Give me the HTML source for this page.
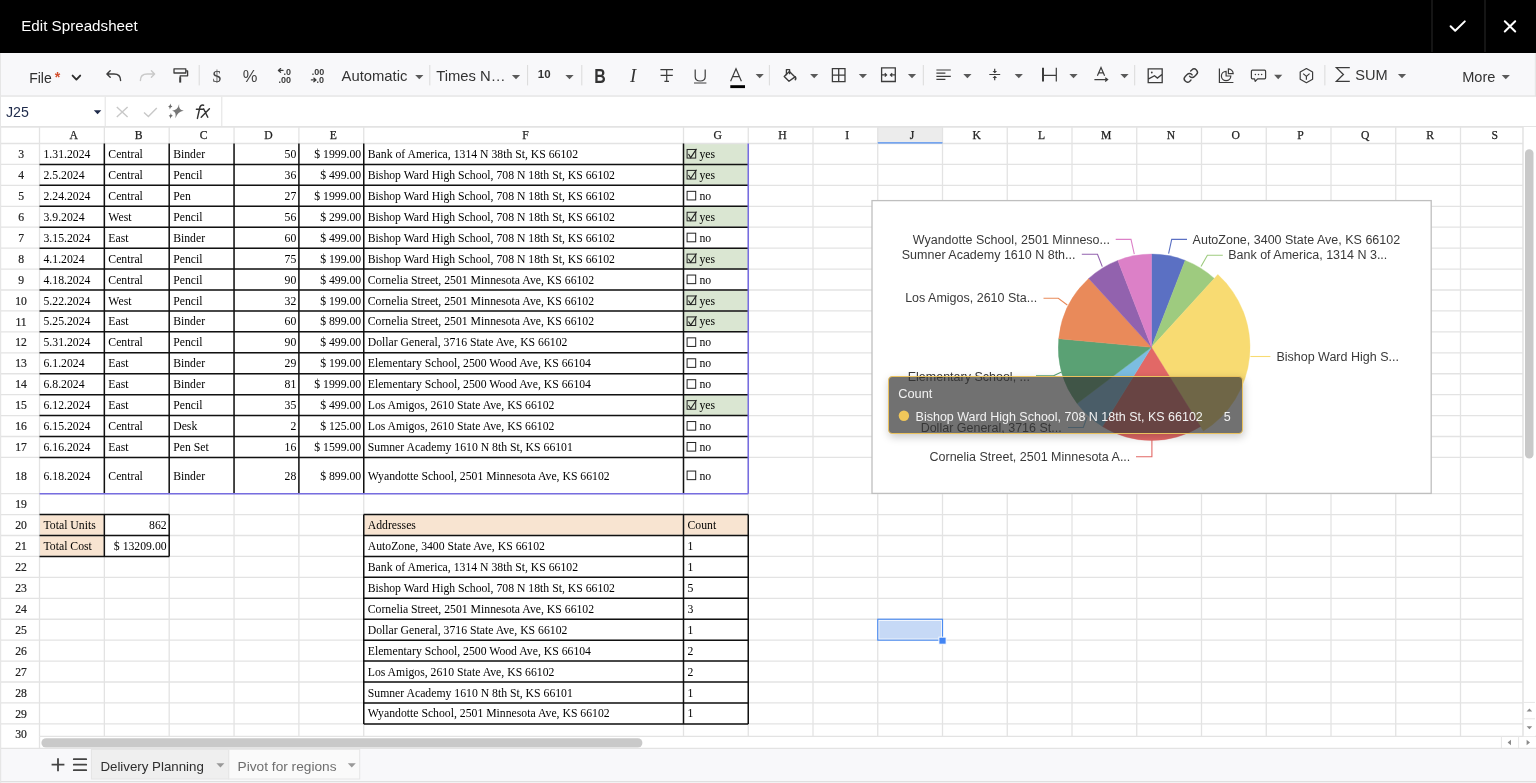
<!DOCTYPE html>
<html><head><meta charset="utf-8"><title>Edit Spreadsheet</title>
<style>
html,body{margin:0;padding:0;background:#fff;width:1536px;height:783px;overflow:hidden;font-family:"Liberation Sans",sans-serif;}
svg{position:absolute;left:0;top:0;display:block;will-change:transform}
</style></head><body>
<svg width="1536" height="783" viewBox="0 0 1536 783">
<rect x="0" y="0" width="1536" height="53" fill="#000"/>
<text x="21.2" y="31.2" font-family='"Liberation Sans", sans-serif' font-size="15.2" fill="#fff">Edit Spreadsheet</text>
<line x1="1432" y1="0" x2="1432" y2="52" stroke="#2b2b2b" stroke-width="1"/>
<line x1="1485" y1="0" x2="1485" y2="52" stroke="#2b2b2b" stroke-width="1"/>
<path d="M1450.6 26.2 L1455.2 30.8 L1464.8 21.4" fill="none" stroke="#fff" stroke-width="2" stroke-linecap="round" stroke-linejoin="round"/>
<path d="M1504.8 21.3 L1515.2 31.5 M1515.2 21.3 L1504.8 31.5" fill="none" stroke="#fff" stroke-width="2" stroke-linecap="round"/>
<rect x="0" y="53" width="1536" height="43" fill="#f8f8fa"/>
<line x1="0" y1="96.2" x2="1536" y2="96.2" stroke="#dedede" stroke-width="1.2"/>
<line x1="1535.3" y1="53" x2="1535.3" y2="783" stroke="#e3e3e3" stroke-width="1"/>
<text x="29.20" y="82.80" font-family='"Liberation Sans", sans-serif' font-size="14" fill="#2e2e2e" font-weight="normal" font-style="normal" text-anchor="start" >File</text>
<text x="54.70" y="81.60" font-family='"Liberation Sans", sans-serif' font-size="14.2" fill="#d4502e" font-weight="bold" font-style="normal" text-anchor="start" >*</text>
<path d="M72.6 75.6 L76.4 79.6 L80.2 75.6" fill="none" stroke="#2e2e2e" stroke-width="1.9" stroke-linecap="round" stroke-linejoin="round"/>
<path d="M110.2 70.8 L106.9 74 L110.2 77.2 M107.2 74 H114 Q120.6 74 120.6 80.6" fill="none" stroke="#3c3c3c" stroke-width="1.4" stroke-linecap="round" stroke-linejoin="round"/>
<path d="M151.4 70.8 L154.6 74 L151.4 77.2 M154.2 74 H147.2 Q140.4 74 140.4 80.6" fill="none" stroke="#c9c9c9" stroke-width="1.4" stroke-linecap="round" stroke-linejoin="round"/>
<path d="M174 68.8 H185.8 V73 H174 Z M185.8 70.9 H187.6 V75.8 H180.2 V78" fill="none" stroke="#3c3c3c" stroke-width="1.3" stroke-linejoin="round"/>
<rect x="179.2" y="77.4" width="2" height="5.2" fill="#3c3c3c"/>
<line x1="199.2" y1="65" x2="199.2" y2="85.4" stroke="#dadada" stroke-width="1"/>
<text x="212.40" y="81.90" font-family='"Liberation Serif", serif' font-size="17.5" fill="#444" font-weight="normal" font-style="normal" text-anchor="start" >$</text>
<text x="242.80" y="82.20" font-family='"Liberation Sans", sans-serif' font-size="16.5" fill="#444" font-weight="normal" font-style="normal" text-anchor="start" >%</text>
<path d="M283 70.4 H278.4 M280.6 68.6 L278.4 70.4 L280.6 72.2" fill="none" stroke="#3c3c3c" stroke-width="1.3" stroke-linecap="round" stroke-linejoin="round"/>
<text x="283.60" y="74.90" font-family='"Liberation Sans", sans-serif' font-size="9" fill="#3c3c3c" font-weight="bold" font-style="normal" text-anchor="start" >.0</text>
<text x="278.40" y="83.30" font-family='"Liberation Sans", sans-serif' font-size="9" fill="#3c3c3c" font-weight="bold" font-style="normal" text-anchor="start" >.00</text>
<text x="311.80" y="74.90" font-family='"Liberation Sans", sans-serif' font-size="9" fill="#3c3c3c" font-weight="bold" font-style="normal" text-anchor="start" >.00</text>
<path d="M311.4 79.9 H316 M313.8 78.1 L316 79.9 L313.8 81.7" fill="none" stroke="#3c3c3c" stroke-width="1.3" stroke-linecap="round" stroke-linejoin="round"/>
<text x="316.40" y="83.30" font-family='"Liberation Sans", sans-serif' font-size="9" fill="#3c3c3c" font-weight="bold" font-style="normal" text-anchor="start" >.0</text>
<text x="341.60" y="80.60" font-family='"Liberation Sans", sans-serif' font-size="14.8" fill="#333" font-weight="normal" font-style="normal" text-anchor="start" >Automatic</text>
<path d="M415.20 74.95 L423.40 74.95 L419.30 79.25 Z" fill="#5a5a5a"/>
<line x1="429.8" y1="65" x2="429.8" y2="85.4" stroke="#dadada" stroke-width="1"/>
<text x="436.20" y="80.60" font-family='"Liberation Sans", sans-serif' font-size="14.8" fill="#333" font-weight="normal" font-style="normal" text-anchor="start" >Times N…</text>
<path d="M511.90 74.95 L520.10 74.95 L516.00 79.25 Z" fill="#5a5a5a"/>
<line x1="527.6" y1="65" x2="527.6" y2="85.4" stroke="#dadada" stroke-width="1"/>
<text x="537.80" y="78.40" font-family='"Liberation Sans", sans-serif' font-size="11.5" fill="#333" font-weight="bold" font-style="normal" text-anchor="start" >10</text>
<path d="M565.40 74.95 L573.60 74.95 L569.50 79.25 Z" fill="#5a5a5a"/>
<line x1="581.8" y1="65" x2="581.8" y2="85.4" stroke="#dadada" stroke-width="1"/>
<text x="594.30" y="83.00" font-family='"Liberation Sans", sans-serif' font-size="20.4" fill="#333" font-weight="bold" font-style="normal" text-anchor="start" textLength="11.5" lengthAdjust="spacingAndGlyphs">B</text>
<text x="629.90" y="82.20" font-family='"Liberation Serif", serif' font-size="18.6" fill="#333" font-weight="normal" font-style="italic" text-anchor="start" >I</text>
<path d="M660.4 69.6 H673 M666.7 69.6 V81.4 M664.4 81.4 H669 M660.6 75.3 H672.8" fill="none" stroke="#3c3c3c" stroke-width="1.2"/>
<path d="M695.2 69.4 V76.8 Q695.2 81 700.2 81 Q705.2 81 705.2 76.8 V69.4 M694 83 H706.4" fill="none" stroke="#3c3c3c" stroke-width="1.2"/>
<path d="M730.6 81.2 L736 68.8 L741.4 81.2 M732.6 76.6 H739.4" fill="none" stroke="#3c3c3c" stroke-width="1.2"/>
<rect x="730.3" y="85.2" width="14.7" height="2.9" fill="#000"/>
<path d="M755.60 73.95 L763.80 73.95 L759.70 78.25 Z" fill="#5a5a5a"/>
<line x1="769.4" y1="65" x2="769.4" y2="85.4" stroke="#dadada" stroke-width="1"/>
<path d="M789.4 71.4 L795 76.9 L789 81.3 L784.2 76.5 Z" fill="none" stroke="#3c3c3c" stroke-width="1.35" stroke-linejoin="round"/>
<path d="M786.4 75.2 V69.6 H789.6 V74.2" fill="none" stroke="#3c3c3c" stroke-width="1.3" stroke-linejoin="round"/>
<path d="M795.3 76.9 Q796.2 78.2 795.4 79.6" fill="none" stroke="#3c3c3c" stroke-width="1.7" stroke-linecap="round"/>
<path d="M810.10 73.95 L818.30 73.95 L814.20 78.25 Z" fill="#5a5a5a"/>
<path d="M832.4 68.6 H845 V81.7 H832.4 Z M838.7 68.6 V81.7 M832.4 75.2 H845" fill="none" stroke="#3c3c3c" stroke-width="1.3"/>
<path d="M858.80 73.95 L867.00 73.95 L862.90 78.25 Z" fill="#5a5a5a"/>
<path d="M881.6 67.8 H895.3 V81.5 H881.6 Z" fill="none" stroke="#3c3c3c" stroke-width="1.3"/>
<path d="M882 74.9 H886.4 M884.8 73.2 L886.6 74.9 L884.8 76.6 M895 74.9 H890.6 M892.2 73.2 L890.4 74.9 L892.2 76.6" fill="none" stroke="#3c3c3c" stroke-width="1.2"/>
<path d="M907.90 73.95 L916.10 73.95 L912.00 78.25 Z" fill="#5a5a5a"/>
<line x1="923.3" y1="65" x2="923.3" y2="85.4" stroke="#dadada" stroke-width="1"/>
<path d="M936.4 70 H950.8 M936.4 73.2 H945.4 M936.4 76.3 H950.8 M936.4 79.3 H945.4" fill="none" stroke="#3c3c3c" stroke-width="1.2"/>
<path d="M963.30 73.95 L971.50 73.95 L967.40 78.25 Z" fill="#5a5a5a"/>
<path d="M989.3 74.5 H1000.2 M994.7 68.8 V72.6 M994.7 76.4 V80.2" fill="none" stroke="#3c3c3c" stroke-width="1.2"/>
<path d="M992.5 71.0 L994.8 73.2 L997.1 71.0 Z M992.5 78.0 L994.8 75.8 L997.1 78.0 Z" fill="#3c3c3c"/>
<path d="M1014.70 73.95 L1022.90 73.95 L1018.80 78.25 Z" fill="#5a5a5a"/>
<path d="M1043 67.7 V81.6" stroke="#3c3c3c" stroke-width="2"/><path d="M1056.3 67.7 V81.6 M1043 75.4 H1056.3" fill="none" stroke="#3c3c3c" stroke-width="1.2"/>
<path d="M1069.40 73.95 L1077.60 73.95 L1073.50 78.25 Z" fill="#5a5a5a"/>
<path d="M1097.4 75.7 L1101 67.4 L1104.6 75.7 M1098.6 72.9 H1103.4 M1094.4 79.6 H1107.4 M1105.2 77.8 L1107.6 79.6 L1105.2 81.4" fill="none" stroke="#3c3c3c" stroke-width="1.2"/>
<path d="M1120.40 73.95 L1128.60 73.95 L1124.50 78.25 Z" fill="#5a5a5a"/>
<line x1="1134.7" y1="65" x2="1134.7" y2="85.4" stroke="#dadada" stroke-width="1"/>
<path d="M1148.2 68.8 H1162.2 V82.6 H1148.2 Z M1148.2 79.1 L1154.5 75.7 L1157.4 78.1 L1162.2 74.2" fill="none" stroke="#3c3c3c" stroke-width="1.3"/>
<circle cx="1151.8" cy="72.5" r="0.9" fill="#3c3c3c"/>
<g transform="translate(1182.9 67.6) scale(0.66)"><path d="M10 13a5 5 0 0 0 7.54.54l3-3a5 5 0 0 0-7.07-7.07l-1.72 1.71" fill="none" stroke="#3c3c3c" stroke-width="2.1" stroke-linecap="round" stroke-linejoin="round"/><path d="M14 11a5 5 0 0 0-7.54-.54l-3 3a5 5 0 0 0 7.07 7.07l1.71-1.71" fill="none" stroke="#3c3c3c" stroke-width="2.1" stroke-linecap="round" stroke-linejoin="round"/></g>
<path d="M1219.4 68.6 V82.5 H1233.4" fill="none" stroke="#3c3c3c" stroke-width="1.2"/>
<path d="M1226.1 71.3 A4.7 4.7 0 1 0 1230.8 76 H1226.1 Z M1228.4 68.9 A4.8 4.8 0 0 1 1233.2 73.7 H1228.4 Z" fill="none" stroke="#3c3c3c" stroke-width="1.2"/>
<path d="M1252.4 70.2 H1264.6 Q1265.6 70.2 1265.6 71.2 V77.8 Q1265.6 78.8 1264.6 78.8 H1257.6 L1255.2 81.4 L1254.6 78.8 H1252.4 Q1251.4 78.8 1251.4 77.8 V71.2 Q1251.4 70.2 1252.4 70.2 Z" fill="none" stroke="#3c3c3c" stroke-width="1.2" stroke-linejoin="round"/>
<circle cx="1255.4" cy="74.6" r="0.75" fill="#3c3c3c"/>
<circle cx="1258.5" cy="74.6" r="0.75" fill="#3c3c3c"/>
<circle cx="1261.6" cy="74.6" r="0.75" fill="#3c3c3c"/>
<path d="M1274.10 74.85 L1282.30 74.85 L1278.20 79.15 Z" fill="#5a5a5a"/>
<path d="M1306.4 68.6 L1312.6 72.1 V79.2 L1306.4 82.7 L1300.2 79.2 V72.1 Z M1303.2 73.6 L1306.4 76.4 L1309.6 73.6 M1306.4 76.4 V79.8" fill="none" stroke="#3c3c3c" stroke-width="1.2" stroke-linejoin="round"/>
<line x1="1324.9" y1="65" x2="1324.9" y2="85.4" stroke="#dadada" stroke-width="1"/>
<path d="M1349.8 67.6 H1336.4 L1343.4 74.5 L1336.4 81.4 H1349.8" fill="none" stroke="#3c3c3c" stroke-width="1.3" stroke-linejoin="miter"/>
<text x="1355.20" y="79.80" font-family='"Liberation Sans", sans-serif' font-size="14.6" fill="#333" font-weight="normal" font-style="normal" text-anchor="start" >SUM</text>
<path d="M1397.90 73.95 L1406.10 73.95 L1402.00 78.25 Z" fill="#5a5a5a"/>
<text x="1462.20" y="81.60" font-family='"Liberation Sans", sans-serif' font-size="14.6" fill="#333" font-weight="normal" font-style="normal" text-anchor="start" >More</text>
<path d="M1501.70 74.95 L1509.90 74.95 L1505.80 79.25 Z" fill="#5a5a5a"/>
<rect x="0" y="96.8" width="1536" height="30" fill="#fff"/>
<line x1="0" y1="126.6" x2="1536" y2="126.6" stroke="#e2e2e2" stroke-width="1"/>
<line x1="105.2" y1="96.8" x2="105.2" y2="126.6" stroke="#e2e2e2" stroke-width="1"/>
<line x1="221.8" y1="96.8" x2="221.8" y2="126.6" stroke="#e2e2e2" stroke-width="1"/>
<text x="6.00" y="116.60" font-family='"Liberation Sans", sans-serif' font-size="14.2" fill="#1e2a4a" font-weight="normal" font-style="normal" text-anchor="start" >J25</text>
<path d="M93.8 110.3 H101.3 L97.55 114.2 Z" fill="#1e2a4a"/>
<path d="M116.8 107 L127.6 117 M127.6 107 L116.8 117" fill="none" stroke="#c8c8c8" stroke-width="1.4"/>
<path d="M144 112.4 L148.4 116.6 L156.8 108" fill="none" stroke="#c8c8c8" stroke-width="1.4"/>
<path d="M179.1 103.9 Q178.4 109.9 183.8 110.7 Q177.6 111.5 175.4 118.3 Q176.8 111.6 172.1 110.7 Q177.9 109.9 179.1 103.9 Z" fill="#777"/>
<path d="M170.4 103.6 Q170.6 106 172.4 106.4 Q170.4 106.8 169.8 109.4 Q170 106.8 168.2 106.4 Q170.2 106 170.4 103.6 Z" fill="#6a6a6a"/>
<path d="M170.9 113 Q171.1 115.4 172.9 115.8 Q170.9 116.2 170.3 118.8 Q170.5 116.2 168.7 115.8 Q170.7 115.4 170.9 113 Z" fill="#6a6a6a"/>
<path d="M203.6 105.2 Q200.2 104.4 199.6 108.6 L197.4 118.4 M196.4 109.3 H203.6 M201.2 117.2 L209.4 108.8 M203.6 108.8 L207.8 117.2" fill="none" stroke="#333" stroke-width="1.45" stroke-linecap="round"/>
<rect x="0" y="127" width="1536" height="609.3" fill="#fff"/>
<rect x="877.75" y="127.00" width="64.75" height="16.50" fill="#ececec"/>
<rect x="683.50" y="143.50" width="64.75" height="20.93" fill="#dae6d2"/>
<rect x="683.50" y="164.43" width="64.75" height="20.93" fill="#dae6d2"/>
<rect x="683.50" y="206.29" width="64.75" height="20.93" fill="#dae6d2"/>
<rect x="683.50" y="248.15" width="64.75" height="20.93" fill="#dae6d2"/>
<rect x="683.50" y="290.01" width="64.75" height="20.93" fill="#dae6d2"/>
<rect x="683.50" y="310.94" width="64.75" height="20.93" fill="#dae6d2"/>
<rect x="683.50" y="394.66" width="64.75" height="20.93" fill="#dae6d2"/>
<rect x="39.50" y="514.58" width="64.85" height="20.93" fill="#f8e4d1"/>
<rect x="39.50" y="535.51" width="64.85" height="20.93" fill="#f8e4d1"/>
<rect x="363.75" y="514.58" width="384.50" height="20.93" fill="#f8e4d1"/>
<line x1="39.50" y1="127.0" x2="39.50" y2="736.3" stroke="#e3e3e3" stroke-width="1.3"/>
<line x1="104.35" y1="127.0" x2="104.35" y2="736.3" stroke="#e3e3e3" stroke-width="1.3"/>
<line x1="169.20" y1="127.0" x2="169.20" y2="736.3" stroke="#e3e3e3" stroke-width="1.3"/>
<line x1="234.05" y1="127.0" x2="234.05" y2="736.3" stroke="#e3e3e3" stroke-width="1.3"/>
<line x1="298.90" y1="127.0" x2="298.90" y2="736.3" stroke="#e3e3e3" stroke-width="1.3"/>
<line x1="363.75" y1="127.0" x2="363.75" y2="736.3" stroke="#e3e3e3" stroke-width="1.3"/>
<line x1="683.50" y1="127.0" x2="683.50" y2="736.3" stroke="#e3e3e3" stroke-width="1.3"/>
<line x1="748.25" y1="127.0" x2="748.25" y2="736.3" stroke="#e3e3e3" stroke-width="1.3"/>
<line x1="813.00" y1="127.0" x2="813.00" y2="736.3" stroke="#e3e3e3" stroke-width="1.3"/>
<line x1="877.75" y1="127.0" x2="877.75" y2="736.3" stroke="#e3e3e3" stroke-width="1.3"/>
<line x1="942.50" y1="127.0" x2="942.50" y2="736.3" stroke="#e3e3e3" stroke-width="1.3"/>
<line x1="1007.25" y1="127.0" x2="1007.25" y2="736.3" stroke="#e3e3e3" stroke-width="1.3"/>
<line x1="1072.00" y1="127.0" x2="1072.00" y2="736.3" stroke="#e3e3e3" stroke-width="1.3"/>
<line x1="1136.75" y1="127.0" x2="1136.75" y2="736.3" stroke="#e3e3e3" stroke-width="1.3"/>
<line x1="1201.50" y1="127.0" x2="1201.50" y2="736.3" stroke="#e3e3e3" stroke-width="1.3"/>
<line x1="1266.25" y1="127.0" x2="1266.25" y2="736.3" stroke="#e3e3e3" stroke-width="1.3"/>
<line x1="1331.00" y1="127.0" x2="1331.00" y2="736.3" stroke="#e3e3e3" stroke-width="1.3"/>
<line x1="1395.75" y1="127.0" x2="1395.75" y2="736.3" stroke="#e3e3e3" stroke-width="1.3"/>
<line x1="1460.50" y1="127.0" x2="1460.50" y2="736.3" stroke="#e3e3e3" stroke-width="1.3"/>
<line x1="1523.00" y1="127.0" x2="1523.00" y2="736.3" stroke="#e3e3e3" stroke-width="1.3"/>
<line x1="0" y1="127.0" x2="1523.0" y2="127.0" stroke="#e3e3e3" stroke-width="1.3"/>
<line x1="0" y1="143.50" x2="1523.0" y2="143.50" stroke="#e3e3e3" stroke-width="1.3"/>
<line x1="0" y1="164.43" x2="1523.0" y2="164.43" stroke="#e3e3e3" stroke-width="1.3"/>
<line x1="0" y1="185.36" x2="1523.0" y2="185.36" stroke="#e3e3e3" stroke-width="1.3"/>
<line x1="0" y1="206.29" x2="1523.0" y2="206.29" stroke="#e3e3e3" stroke-width="1.3"/>
<line x1="0" y1="227.22" x2="1523.0" y2="227.22" stroke="#e3e3e3" stroke-width="1.3"/>
<line x1="0" y1="248.15" x2="1523.0" y2="248.15" stroke="#e3e3e3" stroke-width="1.3"/>
<line x1="0" y1="269.08" x2="1523.0" y2="269.08" stroke="#e3e3e3" stroke-width="1.3"/>
<line x1="0" y1="290.01" x2="1523.0" y2="290.01" stroke="#e3e3e3" stroke-width="1.3"/>
<line x1="0" y1="310.94" x2="1523.0" y2="310.94" stroke="#e3e3e3" stroke-width="1.3"/>
<line x1="0" y1="331.87" x2="1523.0" y2="331.87" stroke="#e3e3e3" stroke-width="1.3"/>
<line x1="0" y1="352.80" x2="1523.0" y2="352.80" stroke="#e3e3e3" stroke-width="1.3"/>
<line x1="0" y1="373.73" x2="1523.0" y2="373.73" stroke="#e3e3e3" stroke-width="1.3"/>
<line x1="0" y1="394.66" x2="1523.0" y2="394.66" stroke="#e3e3e3" stroke-width="1.3"/>
<line x1="0" y1="415.59" x2="1523.0" y2="415.59" stroke="#e3e3e3" stroke-width="1.3"/>
<line x1="0" y1="436.52" x2="1523.0" y2="436.52" stroke="#e3e3e3" stroke-width="1.3"/>
<line x1="0" y1="457.45" x2="1523.0" y2="457.45" stroke="#e3e3e3" stroke-width="1.3"/>
<line x1="0" y1="493.65" x2="1523.0" y2="493.65" stroke="#e3e3e3" stroke-width="1.3"/>
<line x1="0" y1="514.58" x2="1523.0" y2="514.58" stroke="#e3e3e3" stroke-width="1.3"/>
<line x1="0" y1="535.51" x2="1523.0" y2="535.51" stroke="#e3e3e3" stroke-width="1.3"/>
<line x1="0" y1="556.44" x2="1523.0" y2="556.44" stroke="#e3e3e3" stroke-width="1.3"/>
<line x1="0" y1="577.37" x2="1523.0" y2="577.37" stroke="#e3e3e3" stroke-width="1.3"/>
<line x1="0" y1="598.30" x2="1523.0" y2="598.30" stroke="#e3e3e3" stroke-width="1.3"/>
<line x1="0" y1="619.23" x2="1523.0" y2="619.23" stroke="#e3e3e3" stroke-width="1.3"/>
<line x1="0" y1="640.16" x2="1523.0" y2="640.16" stroke="#e3e3e3" stroke-width="1.3"/>
<line x1="0" y1="661.09" x2="1523.0" y2="661.09" stroke="#e3e3e3" stroke-width="1.3"/>
<line x1="0" y1="682.02" x2="1523.0" y2="682.02" stroke="#e3e3e3" stroke-width="1.3"/>
<line x1="0" y1="702.95" x2="1523.0" y2="702.95" stroke="#e3e3e3" stroke-width="1.3"/>
<line x1="0" y1="723.88" x2="1523.0" y2="723.88" stroke="#e3e3e3" stroke-width="1.3"/>
<line x1="0.6" y1="127.0" x2="0.6" y2="748" stroke="#e3e3e3" stroke-width="1.2"/>
<line x1="877.75" y1="142.90" x2="942.50" y2="142.90" stroke="#4d8cf0" stroke-width="1.4"/>
<text x="73.83" y="139.10" font-family='"Liberation Serif", serif' font-size="11.67" fill="#222" font-weight="normal" font-style="normal" text-anchor="middle" stroke="#222" stroke-width="0.25">A</text>
<text x="138.67" y="139.10" font-family='"Liberation Serif", serif' font-size="11.67" fill="#222" font-weight="normal" font-style="normal" text-anchor="middle" stroke="#222" stroke-width="0.25">B</text>
<text x="203.53" y="139.10" font-family='"Liberation Serif", serif' font-size="11.67" fill="#222" font-weight="normal" font-style="normal" text-anchor="middle" stroke="#222" stroke-width="0.25">C</text>
<text x="268.37" y="139.10" font-family='"Liberation Serif", serif' font-size="11.67" fill="#222" font-weight="normal" font-style="normal" text-anchor="middle" stroke="#222" stroke-width="0.25">D</text>
<text x="333.22" y="139.10" font-family='"Liberation Serif", serif' font-size="11.67" fill="#222" font-weight="normal" font-style="normal" text-anchor="middle" stroke="#222" stroke-width="0.25">E</text>
<text x="525.52" y="139.10" font-family='"Liberation Serif", serif' font-size="11.67" fill="#222" font-weight="normal" font-style="normal" text-anchor="middle" stroke="#222" stroke-width="0.25">F</text>
<text x="717.77" y="139.10" font-family='"Liberation Serif", serif' font-size="11.67" fill="#222" font-weight="normal" font-style="normal" text-anchor="middle" stroke="#222" stroke-width="0.25">G</text>
<text x="782.52" y="139.10" font-family='"Liberation Serif", serif' font-size="11.67" fill="#222" font-weight="normal" font-style="normal" text-anchor="middle" stroke="#222" stroke-width="0.25">H</text>
<text x="847.27" y="139.10" font-family='"Liberation Serif", serif' font-size="11.67" fill="#222" font-weight="normal" font-style="normal" text-anchor="middle" stroke="#222" stroke-width="0.25">I</text>
<text x="912.02" y="139.10" font-family='"Liberation Serif", serif' font-size="11.67" fill="#222" font-weight="normal" font-style="normal" text-anchor="middle" stroke="#222" stroke-width="0.25">J</text>
<text x="976.77" y="139.10" font-family='"Liberation Serif", serif' font-size="11.67" fill="#222" font-weight="normal" font-style="normal" text-anchor="middle" stroke="#222" stroke-width="0.25">K</text>
<text x="1041.53" y="139.10" font-family='"Liberation Serif", serif' font-size="11.67" fill="#222" font-weight="normal" font-style="normal" text-anchor="middle" stroke="#222" stroke-width="0.25">L</text>
<text x="1106.28" y="139.10" font-family='"Liberation Serif", serif' font-size="11.67" fill="#222" font-weight="normal" font-style="normal" text-anchor="middle" stroke="#222" stroke-width="0.25">M</text>
<text x="1171.03" y="139.10" font-family='"Liberation Serif", serif' font-size="11.67" fill="#222" font-weight="normal" font-style="normal" text-anchor="middle" stroke="#222" stroke-width="0.25">N</text>
<text x="1235.78" y="139.10" font-family='"Liberation Serif", serif' font-size="11.67" fill="#222" font-weight="normal" font-style="normal" text-anchor="middle" stroke="#222" stroke-width="0.25">O</text>
<text x="1300.53" y="139.10" font-family='"Liberation Serif", serif' font-size="11.67" fill="#222" font-weight="normal" font-style="normal" text-anchor="middle" stroke="#222" stroke-width="0.25">P</text>
<text x="1365.28" y="139.10" font-family='"Liberation Serif", serif' font-size="11.67" fill="#222" font-weight="normal" font-style="normal" text-anchor="middle" stroke="#222" stroke-width="0.25">Q</text>
<text x="1430.03" y="139.10" font-family='"Liberation Serif", serif' font-size="11.67" fill="#222" font-weight="normal" font-style="normal" text-anchor="middle" stroke="#222" stroke-width="0.25">R</text>
<text x="1494.78" y="139.10" font-family='"Liberation Serif", serif' font-size="11.67" fill="#222" font-weight="normal" font-style="normal" text-anchor="middle" stroke="#222" stroke-width="0.25">S</text>
<text x="21.05" y="158.06" font-family='"Liberation Serif", serif' font-size="11.67" fill="#222" font-weight="normal" font-style="normal" text-anchor="middle" stroke="#222" stroke-width="0.2">3</text>
<text x="21.05" y="179.00" font-family='"Liberation Serif", serif' font-size="11.67" fill="#222" font-weight="normal" font-style="normal" text-anchor="middle" stroke="#222" stroke-width="0.2">4</text>
<text x="21.05" y="199.93" font-family='"Liberation Serif", serif' font-size="11.67" fill="#222" font-weight="normal" font-style="normal" text-anchor="middle" stroke="#222" stroke-width="0.2">5</text>
<text x="21.05" y="220.86" font-family='"Liberation Serif", serif' font-size="11.67" fill="#222" font-weight="normal" font-style="normal" text-anchor="middle" stroke="#222" stroke-width="0.2">6</text>
<text x="21.05" y="241.79" font-family='"Liberation Serif", serif' font-size="11.67" fill="#222" font-weight="normal" font-style="normal" text-anchor="middle" stroke="#222" stroke-width="0.2">7</text>
<text x="21.05" y="262.72" font-family='"Liberation Serif", serif' font-size="11.67" fill="#222" font-weight="normal" font-style="normal" text-anchor="middle" stroke="#222" stroke-width="0.2">8</text>
<text x="21.05" y="283.65" font-family='"Liberation Serif", serif' font-size="11.67" fill="#222" font-weight="normal" font-style="normal" text-anchor="middle" stroke="#222" stroke-width="0.2">9</text>
<text x="21.05" y="304.58" font-family='"Liberation Serif", serif' font-size="11.67" fill="#222" font-weight="normal" font-style="normal" text-anchor="middle" stroke="#222" stroke-width="0.2">10</text>
<text x="21.05" y="325.51" font-family='"Liberation Serif", serif' font-size="11.67" fill="#222" font-weight="normal" font-style="normal" text-anchor="middle" stroke="#222" stroke-width="0.2">11</text>
<text x="21.05" y="346.44" font-family='"Liberation Serif", serif' font-size="11.67" fill="#222" font-weight="normal" font-style="normal" text-anchor="middle" stroke="#222" stroke-width="0.2">12</text>
<text x="21.05" y="367.37" font-family='"Liberation Serif", serif' font-size="11.67" fill="#222" font-weight="normal" font-style="normal" text-anchor="middle" stroke="#222" stroke-width="0.2">13</text>
<text x="21.05" y="388.30" font-family='"Liberation Serif", serif' font-size="11.67" fill="#222" font-weight="normal" font-style="normal" text-anchor="middle" stroke="#222" stroke-width="0.2">14</text>
<text x="21.05" y="409.23" font-family='"Liberation Serif", serif' font-size="11.67" fill="#222" font-weight="normal" font-style="normal" text-anchor="middle" stroke="#222" stroke-width="0.2">15</text>
<text x="21.05" y="430.16" font-family='"Liberation Serif", serif' font-size="11.67" fill="#222" font-weight="normal" font-style="normal" text-anchor="middle" stroke="#222" stroke-width="0.2">16</text>
<text x="21.05" y="451.09" font-family='"Liberation Serif", serif' font-size="11.67" fill="#222" font-weight="normal" font-style="normal" text-anchor="middle" stroke="#222" stroke-width="0.2">17</text>
<text x="21.05" y="479.65" font-family='"Liberation Serif", serif' font-size="11.67" fill="#222" font-weight="normal" font-style="normal" text-anchor="middle" stroke="#222" stroke-width="0.2">18</text>
<text x="21.05" y="508.22" font-family='"Liberation Serif", serif' font-size="11.67" fill="#222" font-weight="normal" font-style="normal" text-anchor="middle" stroke="#222" stroke-width="0.2">19</text>
<text x="21.05" y="529.15" font-family='"Liberation Serif", serif' font-size="11.67" fill="#222" font-weight="normal" font-style="normal" text-anchor="middle" stroke="#222" stroke-width="0.2">20</text>
<text x="21.05" y="550.07" font-family='"Liberation Serif", serif' font-size="11.67" fill="#222" font-weight="normal" font-style="normal" text-anchor="middle" stroke="#222" stroke-width="0.2">21</text>
<text x="21.05" y="571.00" font-family='"Liberation Serif", serif' font-size="11.67" fill="#222" font-weight="normal" font-style="normal" text-anchor="middle" stroke="#222" stroke-width="0.2">22</text>
<text x="21.05" y="591.93" font-family='"Liberation Serif", serif' font-size="11.67" fill="#222" font-weight="normal" font-style="normal" text-anchor="middle" stroke="#222" stroke-width="0.2">23</text>
<text x="21.05" y="612.86" font-family='"Liberation Serif", serif' font-size="11.67" fill="#222" font-weight="normal" font-style="normal" text-anchor="middle" stroke="#222" stroke-width="0.2">24</text>
<text x="21.05" y="633.79" font-family='"Liberation Serif", serif' font-size="11.67" fill="#222" font-weight="normal" font-style="normal" text-anchor="middle" stroke="#222" stroke-width="0.2">25</text>
<text x="21.05" y="654.72" font-family='"Liberation Serif", serif' font-size="11.67" fill="#222" font-weight="normal" font-style="normal" text-anchor="middle" stroke="#222" stroke-width="0.2">26</text>
<text x="21.05" y="675.65" font-family='"Liberation Serif", serif' font-size="11.67" fill="#222" font-weight="normal" font-style="normal" text-anchor="middle" stroke="#222" stroke-width="0.2">27</text>
<text x="21.05" y="696.58" font-family='"Liberation Serif", serif' font-size="11.67" fill="#222" font-weight="normal" font-style="normal" text-anchor="middle" stroke="#222" stroke-width="0.2">28</text>
<text x="21.05" y="717.51" font-family='"Liberation Serif", serif' font-size="11.67" fill="#222" font-weight="normal" font-style="normal" text-anchor="middle" stroke="#222" stroke-width="0.2">29</text>
<text x="21.05" y="738.44" font-family='"Liberation Serif", serif' font-size="11.67" fill="#222" font-weight="normal" font-style="normal" text-anchor="middle" stroke="#222" stroke-width="0.2">30</text>
<line x1="39.50" y1="164.43" x2="748.25" y2="164.43" stroke="#111" stroke-width="1.5"/>
<line x1="39.50" y1="185.36" x2="748.25" y2="185.36" stroke="#111" stroke-width="1.5"/>
<line x1="39.50" y1="206.29" x2="748.25" y2="206.29" stroke="#111" stroke-width="1.5"/>
<line x1="39.50" y1="227.22" x2="748.25" y2="227.22" stroke="#111" stroke-width="1.5"/>
<line x1="39.50" y1="248.15" x2="748.25" y2="248.15" stroke="#111" stroke-width="1.5"/>
<line x1="39.50" y1="269.08" x2="748.25" y2="269.08" stroke="#111" stroke-width="1.5"/>
<line x1="39.50" y1="290.01" x2="748.25" y2="290.01" stroke="#111" stroke-width="1.5"/>
<line x1="39.50" y1="310.94" x2="748.25" y2="310.94" stroke="#111" stroke-width="1.5"/>
<line x1="39.50" y1="331.87" x2="748.25" y2="331.87" stroke="#111" stroke-width="1.5"/>
<line x1="39.50" y1="352.80" x2="748.25" y2="352.80" stroke="#111" stroke-width="1.5"/>
<line x1="39.50" y1="373.73" x2="748.25" y2="373.73" stroke="#111" stroke-width="1.5"/>
<line x1="39.50" y1="394.66" x2="748.25" y2="394.66" stroke="#111" stroke-width="1.5"/>
<line x1="39.50" y1="415.59" x2="748.25" y2="415.59" stroke="#111" stroke-width="1.5"/>
<line x1="39.50" y1="436.52" x2="748.25" y2="436.52" stroke="#111" stroke-width="1.5"/>
<line x1="39.50" y1="457.45" x2="748.25" y2="457.45" stroke="#111" stroke-width="1.5"/>
<line x1="104.35" y1="143.50" x2="104.35" y2="493.65" stroke="#111" stroke-width="1.5"/>
<line x1="169.20" y1="143.50" x2="169.20" y2="493.65" stroke="#111" stroke-width="1.5"/>
<line x1="234.05" y1="143.50" x2="234.05" y2="493.65" stroke="#111" stroke-width="1.5"/>
<line x1="298.90" y1="143.50" x2="298.90" y2="493.65" stroke="#111" stroke-width="1.5"/>
<line x1="363.75" y1="143.50" x2="363.75" y2="493.65" stroke="#111" stroke-width="1.5"/>
<line x1="683.50" y1="143.50" x2="683.50" y2="493.65" stroke="#111" stroke-width="1.5"/>
<line x1="748.25" y1="143.50" x2="748.25" y2="493.65" stroke="#776de0" stroke-width="1.55"/>
<line x1="39.50" y1="493.65" x2="748.25" y2="493.65" stroke="#776de0" stroke-width="1.55"/>
<line x1="39.50" y1="514.58" x2="169.20" y2="514.58" stroke="#111" stroke-width="1.5"/>
<line x1="39.50" y1="535.51" x2="169.20" y2="535.51" stroke="#111" stroke-width="1.5"/>
<line x1="39.50" y1="556.44" x2="169.20" y2="556.44" stroke="#111" stroke-width="1.5"/>
<line x1="104.35" y1="514.58" x2="104.35" y2="556.44" stroke="#111" stroke-width="1.5"/>
<line x1="169.20" y1="514.58" x2="169.20" y2="556.44" stroke="#111" stroke-width="1.5"/>
<line x1="363.75" y1="514.58" x2="748.25" y2="514.58" stroke="#111" stroke-width="1.5"/>
<line x1="363.75" y1="535.51" x2="748.25" y2="535.51" stroke="#111" stroke-width="1.5"/>
<line x1="363.75" y1="556.44" x2="748.25" y2="556.44" stroke="#111" stroke-width="1.5"/>
<line x1="363.75" y1="577.37" x2="748.25" y2="577.37" stroke="#111" stroke-width="1.5"/>
<line x1="363.75" y1="598.30" x2="748.25" y2="598.30" stroke="#111" stroke-width="1.5"/>
<line x1="363.75" y1="619.23" x2="748.25" y2="619.23" stroke="#111" stroke-width="1.5"/>
<line x1="363.75" y1="640.16" x2="748.25" y2="640.16" stroke="#111" stroke-width="1.5"/>
<line x1="363.75" y1="661.09" x2="748.25" y2="661.09" stroke="#111" stroke-width="1.5"/>
<line x1="363.75" y1="682.02" x2="748.25" y2="682.02" stroke="#111" stroke-width="1.5"/>
<line x1="363.75" y1="702.95" x2="748.25" y2="702.95" stroke="#111" stroke-width="1.5"/>
<line x1="363.75" y1="723.88" x2="748.25" y2="723.88" stroke="#111" stroke-width="1.5"/>
<line x1="363.75" y1="514.58" x2="363.75" y2="723.88" stroke="#111" stroke-width="1.5"/>
<line x1="683.50" y1="514.58" x2="683.50" y2="723.88" stroke="#111" stroke-width="1.5"/>
<line x1="748.25" y1="514.58" x2="748.25" y2="723.88" stroke="#111" stroke-width="1.5"/>
<rect x="879.25" y="620.73" width="61.75" height="17.93" fill="#c6d9f6"/>
<rect x="877.75" y="619.23" width="64.75" height="20.93" fill="none" stroke="#4a8bf2" stroke-width="1.15"/>
<rect x="938.90" y="637.16" width="7.2" height="7.0" fill="#4285f4" stroke="#fff" stroke-width="0.9"/>
<text x="43.50" y="158.02" font-family='"Liberation Serif", serif' font-size="11.72" fill="#000" font-weight="normal" font-style="normal" text-anchor="start" >1.31.2024</text>
<text x="108.35" y="158.02" font-family='"Liberation Serif", serif' font-size="11.72" fill="#000" font-weight="normal" font-style="normal" text-anchor="start" >Central</text>
<text x="173.20" y="158.02" font-family='"Liberation Serif", serif' font-size="11.72" fill="#000" font-weight="normal" font-style="normal" text-anchor="start" >Binder</text>
<text x="296.30" y="158.02" font-family='"Liberation Serif", serif' font-size="11.72" fill="#000" font-weight="normal" font-style="normal" text-anchor="end" >50</text>
<text x="361.15" y="158.02" font-family='"Liberation Serif", serif' font-size="11.72" fill="#000" font-weight="normal" font-style="normal" text-anchor="end" >$ 1999.00</text>
<text x="367.75" y="158.02" font-family='"Liberation Serif", serif' font-size="11.72" fill="#000" font-weight="normal" font-style="normal" text-anchor="start" >Bank of America, 1314 N 38th St, KS 66102</text>
<rect x="687.10" y="149.47" width="8.6" height="8.6" fill="none" stroke="#222" stroke-width="1"/>
<path d="M688.50 154.06 L690.70 157.66 L696.50 148.87" fill="none" stroke="#222" stroke-width="1.1"/>
<text x="699.50" y="158.02" font-family='"Liberation Serif", serif' font-size="11.72" fill="#000" font-weight="normal" font-style="normal" text-anchor="start" >yes</text>
<text x="43.50" y="178.95" font-family='"Liberation Serif", serif' font-size="11.72" fill="#000" font-weight="normal" font-style="normal" text-anchor="start" >2.5.2024</text>
<text x="108.35" y="178.95" font-family='"Liberation Serif", serif' font-size="11.72" fill="#000" font-weight="normal" font-style="normal" text-anchor="start" >Central</text>
<text x="173.20" y="178.95" font-family='"Liberation Serif", serif' font-size="11.72" fill="#000" font-weight="normal" font-style="normal" text-anchor="start" >Pencil</text>
<text x="296.30" y="178.95" font-family='"Liberation Serif", serif' font-size="11.72" fill="#000" font-weight="normal" font-style="normal" text-anchor="end" >36</text>
<text x="361.15" y="178.95" font-family='"Liberation Serif", serif' font-size="11.72" fill="#000" font-weight="normal" font-style="normal" text-anchor="end" >$ 499.00</text>
<text x="367.75" y="178.95" font-family='"Liberation Serif", serif' font-size="11.72" fill="#000" font-weight="normal" font-style="normal" text-anchor="start" >Bishop Ward High School, 708 N 18th St, KS 66102</text>
<rect x="687.10" y="170.40" width="8.6" height="8.6" fill="none" stroke="#222" stroke-width="1"/>
<path d="M688.50 175.00 L690.70 178.59 L696.50 169.80" fill="none" stroke="#222" stroke-width="1.1"/>
<text x="699.50" y="178.95" font-family='"Liberation Serif", serif' font-size="11.72" fill="#000" font-weight="normal" font-style="normal" text-anchor="start" >yes</text>
<text x="43.50" y="199.88" font-family='"Liberation Serif", serif' font-size="11.72" fill="#000" font-weight="normal" font-style="normal" text-anchor="start" >2.24.2024</text>
<text x="108.35" y="199.88" font-family='"Liberation Serif", serif' font-size="11.72" fill="#000" font-weight="normal" font-style="normal" text-anchor="start" >Central</text>
<text x="173.20" y="199.88" font-family='"Liberation Serif", serif' font-size="11.72" fill="#000" font-weight="normal" font-style="normal" text-anchor="start" >Pen</text>
<text x="296.30" y="199.88" font-family='"Liberation Serif", serif' font-size="11.72" fill="#000" font-weight="normal" font-style="normal" text-anchor="end" >27</text>
<text x="361.15" y="199.88" font-family='"Liberation Serif", serif' font-size="11.72" fill="#000" font-weight="normal" font-style="normal" text-anchor="end" >$ 1999.00</text>
<text x="367.75" y="199.88" font-family='"Liberation Serif", serif' font-size="11.72" fill="#000" font-weight="normal" font-style="normal" text-anchor="start" >Bishop Ward High School, 708 N 18th St, KS 66102</text>
<rect x="687.10" y="191.33" width="8.6" height="8.6" fill="none" stroke="#222" stroke-width="1"/>
<text x="699.50" y="199.88" font-family='"Liberation Serif", serif' font-size="11.72" fill="#000" font-weight="normal" font-style="normal" text-anchor="start" >no</text>
<text x="43.50" y="220.81" font-family='"Liberation Serif", serif' font-size="11.72" fill="#000" font-weight="normal" font-style="normal" text-anchor="start" >3.9.2024</text>
<text x="108.35" y="220.81" font-family='"Liberation Serif", serif' font-size="11.72" fill="#000" font-weight="normal" font-style="normal" text-anchor="start" >West</text>
<text x="173.20" y="220.81" font-family='"Liberation Serif", serif' font-size="11.72" fill="#000" font-weight="normal" font-style="normal" text-anchor="start" >Pencil</text>
<text x="296.30" y="220.81" font-family='"Liberation Serif", serif' font-size="11.72" fill="#000" font-weight="normal" font-style="normal" text-anchor="end" >56</text>
<text x="361.15" y="220.81" font-family='"Liberation Serif", serif' font-size="11.72" fill="#000" font-weight="normal" font-style="normal" text-anchor="end" >$ 299.00</text>
<text x="367.75" y="220.81" font-family='"Liberation Serif", serif' font-size="11.72" fill="#000" font-weight="normal" font-style="normal" text-anchor="start" >Bishop Ward High School, 708 N 18th St, KS 66102</text>
<rect x="687.10" y="212.26" width="8.6" height="8.6" fill="none" stroke="#222" stroke-width="1"/>
<path d="M688.50 216.86 L690.70 220.46 L696.50 211.66" fill="none" stroke="#222" stroke-width="1.1"/>
<text x="699.50" y="220.81" font-family='"Liberation Serif", serif' font-size="11.72" fill="#000" font-weight="normal" font-style="normal" text-anchor="start" >yes</text>
<text x="43.50" y="241.74" font-family='"Liberation Serif", serif' font-size="11.72" fill="#000" font-weight="normal" font-style="normal" text-anchor="start" >3.15.2024</text>
<text x="108.35" y="241.74" font-family='"Liberation Serif", serif' font-size="11.72" fill="#000" font-weight="normal" font-style="normal" text-anchor="start" >East</text>
<text x="173.20" y="241.74" font-family='"Liberation Serif", serif' font-size="11.72" fill="#000" font-weight="normal" font-style="normal" text-anchor="start" >Binder</text>
<text x="296.30" y="241.74" font-family='"Liberation Serif", serif' font-size="11.72" fill="#000" font-weight="normal" font-style="normal" text-anchor="end" >60</text>
<text x="361.15" y="241.74" font-family='"Liberation Serif", serif' font-size="11.72" fill="#000" font-weight="normal" font-style="normal" text-anchor="end" >$ 499.00</text>
<text x="367.75" y="241.74" font-family='"Liberation Serif", serif' font-size="11.72" fill="#000" font-weight="normal" font-style="normal" text-anchor="start" >Bishop Ward High School, 708 N 18th St, KS 66102</text>
<rect x="687.10" y="233.19" width="8.6" height="8.6" fill="none" stroke="#222" stroke-width="1"/>
<text x="699.50" y="241.74" font-family='"Liberation Serif", serif' font-size="11.72" fill="#000" font-weight="normal" font-style="normal" text-anchor="start" >no</text>
<text x="43.50" y="262.67" font-family='"Liberation Serif", serif' font-size="11.72" fill="#000" font-weight="normal" font-style="normal" text-anchor="start" >4.1.2024</text>
<text x="108.35" y="262.67" font-family='"Liberation Serif", serif' font-size="11.72" fill="#000" font-weight="normal" font-style="normal" text-anchor="start" >Central</text>
<text x="173.20" y="262.67" font-family='"Liberation Serif", serif' font-size="11.72" fill="#000" font-weight="normal" font-style="normal" text-anchor="start" >Pencil</text>
<text x="296.30" y="262.67" font-family='"Liberation Serif", serif' font-size="11.72" fill="#000" font-weight="normal" font-style="normal" text-anchor="end" >75</text>
<text x="361.15" y="262.67" font-family='"Liberation Serif", serif' font-size="11.72" fill="#000" font-weight="normal" font-style="normal" text-anchor="end" >$ 199.00</text>
<text x="367.75" y="262.67" font-family='"Liberation Serif", serif' font-size="11.72" fill="#000" font-weight="normal" font-style="normal" text-anchor="start" >Bishop Ward High School, 708 N 18th St, KS 66102</text>
<rect x="687.10" y="254.12" width="8.6" height="8.6" fill="none" stroke="#222" stroke-width="1"/>
<path d="M688.50 258.72 L690.70 262.31 L696.50 253.52" fill="none" stroke="#222" stroke-width="1.1"/>
<text x="699.50" y="262.67" font-family='"Liberation Serif", serif' font-size="11.72" fill="#000" font-weight="normal" font-style="normal" text-anchor="start" >yes</text>
<text x="43.50" y="283.60" font-family='"Liberation Serif", serif' font-size="11.72" fill="#000" font-weight="normal" font-style="normal" text-anchor="start" >4.18.2024</text>
<text x="108.35" y="283.60" font-family='"Liberation Serif", serif' font-size="11.72" fill="#000" font-weight="normal" font-style="normal" text-anchor="start" >Central</text>
<text x="173.20" y="283.60" font-family='"Liberation Serif", serif' font-size="11.72" fill="#000" font-weight="normal" font-style="normal" text-anchor="start" >Pencil</text>
<text x="296.30" y="283.60" font-family='"Liberation Serif", serif' font-size="11.72" fill="#000" font-weight="normal" font-style="normal" text-anchor="end" >90</text>
<text x="361.15" y="283.60" font-family='"Liberation Serif", serif' font-size="11.72" fill="#000" font-weight="normal" font-style="normal" text-anchor="end" >$ 499.00</text>
<text x="367.75" y="283.60" font-family='"Liberation Serif", serif' font-size="11.72" fill="#000" font-weight="normal" font-style="normal" text-anchor="start" >Cornelia Street, 2501 Minnesota Ave, KS 66102</text>
<rect x="687.10" y="275.05" width="8.6" height="8.6" fill="none" stroke="#222" stroke-width="1"/>
<text x="699.50" y="283.60" font-family='"Liberation Serif", serif' font-size="11.72" fill="#000" font-weight="normal" font-style="normal" text-anchor="start" >no</text>
<text x="43.50" y="304.53" font-family='"Liberation Serif", serif' font-size="11.72" fill="#000" font-weight="normal" font-style="normal" text-anchor="start" >5.22.2024</text>
<text x="108.35" y="304.53" font-family='"Liberation Serif", serif' font-size="11.72" fill="#000" font-weight="normal" font-style="normal" text-anchor="start" >West</text>
<text x="173.20" y="304.53" font-family='"Liberation Serif", serif' font-size="11.72" fill="#000" font-weight="normal" font-style="normal" text-anchor="start" >Pencil</text>
<text x="296.30" y="304.53" font-family='"Liberation Serif", serif' font-size="11.72" fill="#000" font-weight="normal" font-style="normal" text-anchor="end" >32</text>
<text x="361.15" y="304.53" font-family='"Liberation Serif", serif' font-size="11.72" fill="#000" font-weight="normal" font-style="normal" text-anchor="end" >$ 199.00</text>
<text x="367.75" y="304.53" font-family='"Liberation Serif", serif' font-size="11.72" fill="#000" font-weight="normal" font-style="normal" text-anchor="start" >Cornelia Street, 2501 Minnesota Ave, KS 66102</text>
<rect x="687.10" y="295.98" width="8.6" height="8.6" fill="none" stroke="#222" stroke-width="1"/>
<path d="M688.50 300.58 L690.70 304.18 L696.50 295.38" fill="none" stroke="#222" stroke-width="1.1"/>
<text x="699.50" y="304.53" font-family='"Liberation Serif", serif' font-size="11.72" fill="#000" font-weight="normal" font-style="normal" text-anchor="start" >yes</text>
<text x="43.50" y="325.46" font-family='"Liberation Serif", serif' font-size="11.72" fill="#000" font-weight="normal" font-style="normal" text-anchor="start" >5.25.2024</text>
<text x="108.35" y="325.46" font-family='"Liberation Serif", serif' font-size="11.72" fill="#000" font-weight="normal" font-style="normal" text-anchor="start" >East</text>
<text x="173.20" y="325.46" font-family='"Liberation Serif", serif' font-size="11.72" fill="#000" font-weight="normal" font-style="normal" text-anchor="start" >Binder</text>
<text x="296.30" y="325.46" font-family='"Liberation Serif", serif' font-size="11.72" fill="#000" font-weight="normal" font-style="normal" text-anchor="end" >60</text>
<text x="361.15" y="325.46" font-family='"Liberation Serif", serif' font-size="11.72" fill="#000" font-weight="normal" font-style="normal" text-anchor="end" >$ 899.00</text>
<text x="367.75" y="325.46" font-family='"Liberation Serif", serif' font-size="11.72" fill="#000" font-weight="normal" font-style="normal" text-anchor="start" >Cornelia Street, 2501 Minnesota Ave, KS 66102</text>
<rect x="687.10" y="316.91" width="8.6" height="8.6" fill="none" stroke="#222" stroke-width="1"/>
<path d="M688.50 321.51 L690.70 325.11 L696.50 316.31" fill="none" stroke="#222" stroke-width="1.1"/>
<text x="699.50" y="325.46" font-family='"Liberation Serif", serif' font-size="11.72" fill="#000" font-weight="normal" font-style="normal" text-anchor="start" >yes</text>
<text x="43.50" y="346.39" font-family='"Liberation Serif", serif' font-size="11.72" fill="#000" font-weight="normal" font-style="normal" text-anchor="start" >5.31.2024</text>
<text x="108.35" y="346.39" font-family='"Liberation Serif", serif' font-size="11.72" fill="#000" font-weight="normal" font-style="normal" text-anchor="start" >Central</text>
<text x="173.20" y="346.39" font-family='"Liberation Serif", serif' font-size="11.72" fill="#000" font-weight="normal" font-style="normal" text-anchor="start" >Pencil</text>
<text x="296.30" y="346.39" font-family='"Liberation Serif", serif' font-size="11.72" fill="#000" font-weight="normal" font-style="normal" text-anchor="end" >90</text>
<text x="361.15" y="346.39" font-family='"Liberation Serif", serif' font-size="11.72" fill="#000" font-weight="normal" font-style="normal" text-anchor="end" >$ 499.00</text>
<text x="367.75" y="346.39" font-family='"Liberation Serif", serif' font-size="11.72" fill="#000" font-weight="normal" font-style="normal" text-anchor="start" >Dollar General, 3716 State Ave, KS 66102</text>
<rect x="687.10" y="337.84" width="8.6" height="8.6" fill="none" stroke="#222" stroke-width="1"/>
<text x="699.50" y="346.39" font-family='"Liberation Serif", serif' font-size="11.72" fill="#000" font-weight="normal" font-style="normal" text-anchor="start" >no</text>
<text x="43.50" y="367.32" font-family='"Liberation Serif", serif' font-size="11.72" fill="#000" font-weight="normal" font-style="normal" text-anchor="start" >6.1.2024</text>
<text x="108.35" y="367.32" font-family='"Liberation Serif", serif' font-size="11.72" fill="#000" font-weight="normal" font-style="normal" text-anchor="start" >East</text>
<text x="173.20" y="367.32" font-family='"Liberation Serif", serif' font-size="11.72" fill="#000" font-weight="normal" font-style="normal" text-anchor="start" >Binder</text>
<text x="296.30" y="367.32" font-family='"Liberation Serif", serif' font-size="11.72" fill="#000" font-weight="normal" font-style="normal" text-anchor="end" >29</text>
<text x="361.15" y="367.32" font-family='"Liberation Serif", serif' font-size="11.72" fill="#000" font-weight="normal" font-style="normal" text-anchor="end" >$ 199.00</text>
<text x="367.75" y="367.32" font-family='"Liberation Serif", serif' font-size="11.72" fill="#000" font-weight="normal" font-style="normal" text-anchor="start" >Elementary School, 2500 Wood Ave, KS 66104</text>
<rect x="687.10" y="358.77" width="8.6" height="8.6" fill="none" stroke="#222" stroke-width="1"/>
<text x="699.50" y="367.32" font-family='"Liberation Serif", serif' font-size="11.72" fill="#000" font-weight="normal" font-style="normal" text-anchor="start" >no</text>
<text x="43.50" y="388.25" font-family='"Liberation Serif", serif' font-size="11.72" fill="#000" font-weight="normal" font-style="normal" text-anchor="start" >6.8.2024</text>
<text x="108.35" y="388.25" font-family='"Liberation Serif", serif' font-size="11.72" fill="#000" font-weight="normal" font-style="normal" text-anchor="start" >East</text>
<text x="173.20" y="388.25" font-family='"Liberation Serif", serif' font-size="11.72" fill="#000" font-weight="normal" font-style="normal" text-anchor="start" >Binder</text>
<text x="296.30" y="388.25" font-family='"Liberation Serif", serif' font-size="11.72" fill="#000" font-weight="normal" font-style="normal" text-anchor="end" >81</text>
<text x="361.15" y="388.25" font-family='"Liberation Serif", serif' font-size="11.72" fill="#000" font-weight="normal" font-style="normal" text-anchor="end" >$ 1999.00</text>
<text x="367.75" y="388.25" font-family='"Liberation Serif", serif' font-size="11.72" fill="#000" font-weight="normal" font-style="normal" text-anchor="start" >Elementary School, 2500 Wood Ave, KS 66104</text>
<rect x="687.10" y="379.70" width="8.6" height="8.6" fill="none" stroke="#222" stroke-width="1"/>
<text x="699.50" y="388.25" font-family='"Liberation Serif", serif' font-size="11.72" fill="#000" font-weight="normal" font-style="normal" text-anchor="start" >no</text>
<text x="43.50" y="409.18" font-family='"Liberation Serif", serif' font-size="11.72" fill="#000" font-weight="normal" font-style="normal" text-anchor="start" >6.12.2024</text>
<text x="108.35" y="409.18" font-family='"Liberation Serif", serif' font-size="11.72" fill="#000" font-weight="normal" font-style="normal" text-anchor="start" >East</text>
<text x="173.20" y="409.18" font-family='"Liberation Serif", serif' font-size="11.72" fill="#000" font-weight="normal" font-style="normal" text-anchor="start" >Pencil</text>
<text x="296.30" y="409.18" font-family='"Liberation Serif", serif' font-size="11.72" fill="#000" font-weight="normal" font-style="normal" text-anchor="end" >35</text>
<text x="361.15" y="409.18" font-family='"Liberation Serif", serif' font-size="11.72" fill="#000" font-weight="normal" font-style="normal" text-anchor="end" >$ 499.00</text>
<text x="367.75" y="409.18" font-family='"Liberation Serif", serif' font-size="11.72" fill="#000" font-weight="normal" font-style="normal" text-anchor="start" >Los Amigos, 2610 State Ave, KS 66102</text>
<rect x="687.10" y="400.63" width="8.6" height="8.6" fill="none" stroke="#222" stroke-width="1"/>
<path d="M688.50 405.23 L690.70 408.83 L696.50 400.03" fill="none" stroke="#222" stroke-width="1.1"/>
<text x="699.50" y="409.18" font-family='"Liberation Serif", serif' font-size="11.72" fill="#000" font-weight="normal" font-style="normal" text-anchor="start" >yes</text>
<text x="43.50" y="430.11" font-family='"Liberation Serif", serif' font-size="11.72" fill="#000" font-weight="normal" font-style="normal" text-anchor="start" >6.15.2024</text>
<text x="108.35" y="430.11" font-family='"Liberation Serif", serif' font-size="11.72" fill="#000" font-weight="normal" font-style="normal" text-anchor="start" >Central</text>
<text x="173.20" y="430.11" font-family='"Liberation Serif", serif' font-size="11.72" fill="#000" font-weight="normal" font-style="normal" text-anchor="start" >Desk</text>
<text x="296.30" y="430.11" font-family='"Liberation Serif", serif' font-size="11.72" fill="#000" font-weight="normal" font-style="normal" text-anchor="end" >2</text>
<text x="361.15" y="430.11" font-family='"Liberation Serif", serif' font-size="11.72" fill="#000" font-weight="normal" font-style="normal" text-anchor="end" >$ 125.00</text>
<text x="367.75" y="430.11" font-family='"Liberation Serif", serif' font-size="11.72" fill="#000" font-weight="normal" font-style="normal" text-anchor="start" >Los Amigos, 2610 State Ave, KS 66102</text>
<rect x="687.10" y="421.56" width="8.6" height="8.6" fill="none" stroke="#222" stroke-width="1"/>
<text x="699.50" y="430.11" font-family='"Liberation Serif", serif' font-size="11.72" fill="#000" font-weight="normal" font-style="normal" text-anchor="start" >no</text>
<text x="43.50" y="451.04" font-family='"Liberation Serif", serif' font-size="11.72" fill="#000" font-weight="normal" font-style="normal" text-anchor="start" >6.16.2024</text>
<text x="108.35" y="451.04" font-family='"Liberation Serif", serif' font-size="11.72" fill="#000" font-weight="normal" font-style="normal" text-anchor="start" >East</text>
<text x="173.20" y="451.04" font-family='"Liberation Serif", serif' font-size="11.72" fill="#000" font-weight="normal" font-style="normal" text-anchor="start" >Pen Set</text>
<text x="296.30" y="451.04" font-family='"Liberation Serif", serif' font-size="11.72" fill="#000" font-weight="normal" font-style="normal" text-anchor="end" >16</text>
<text x="361.15" y="451.04" font-family='"Liberation Serif", serif' font-size="11.72" fill="#000" font-weight="normal" font-style="normal" text-anchor="end" >$ 1599.00</text>
<text x="367.75" y="451.04" font-family='"Liberation Serif", serif' font-size="11.72" fill="#000" font-weight="normal" font-style="normal" text-anchor="start" >Sumner Academy 1610 N 8th St, KS 66101</text>
<rect x="687.10" y="442.49" width="8.6" height="8.6" fill="none" stroke="#222" stroke-width="1"/>
<text x="699.50" y="451.04" font-family='"Liberation Serif", serif' font-size="11.72" fill="#000" font-weight="normal" font-style="normal" text-anchor="start" >no</text>
<text x="43.50" y="479.60" font-family='"Liberation Serif", serif' font-size="11.72" fill="#000" font-weight="normal" font-style="normal" text-anchor="start" >6.18.2024</text>
<text x="108.35" y="479.60" font-family='"Liberation Serif", serif' font-size="11.72" fill="#000" font-weight="normal" font-style="normal" text-anchor="start" >Central</text>
<text x="173.20" y="479.60" font-family='"Liberation Serif", serif' font-size="11.72" fill="#000" font-weight="normal" font-style="normal" text-anchor="start" >Binder</text>
<text x="296.30" y="479.60" font-family='"Liberation Serif", serif' font-size="11.72" fill="#000" font-weight="normal" font-style="normal" text-anchor="end" >28</text>
<text x="361.15" y="479.60" font-family='"Liberation Serif", serif' font-size="11.72" fill="#000" font-weight="normal" font-style="normal" text-anchor="end" >$ 899.00</text>
<text x="367.75" y="479.60" font-family='"Liberation Serif", serif' font-size="11.72" fill="#000" font-weight="normal" font-style="normal" text-anchor="start" >Wyandotte School, 2501 Minnesota Ave, KS 66102</text>
<rect x="687.10" y="471.05" width="8.6" height="8.6" fill="none" stroke="#222" stroke-width="1"/>
<text x="699.50" y="479.60" font-family='"Liberation Serif", serif' font-size="11.72" fill="#000" font-weight="normal" font-style="normal" text-anchor="start" >no</text>
<text x="43.50" y="529.10" font-family='"Liberation Serif", serif' font-size="11.72" fill="#000" font-weight="normal" font-style="normal" text-anchor="start" >Total Units</text>
<text x="166.60" y="529.10" font-family='"Liberation Serif", serif' font-size="11.72" fill="#000" font-weight="normal" font-style="normal" text-anchor="end" >862</text>
<text x="43.50" y="550.02" font-family='"Liberation Serif", serif' font-size="11.72" fill="#000" font-weight="normal" font-style="normal" text-anchor="start" >Total Cost</text>
<text x="166.60" y="550.02" font-family='"Liberation Serif", serif' font-size="11.72" fill="#000" font-weight="normal" font-style="normal" text-anchor="end" >$ 13209.00</text>
<text x="367.75" y="529.10" font-family='"Liberation Serif", serif' font-size="11.72" fill="#000" font-weight="normal" font-style="normal" text-anchor="start" >Addresses</text>
<text x="687.50" y="529.10" font-family='"Liberation Serif", serif' font-size="11.72" fill="#000" font-weight="normal" font-style="normal" text-anchor="start" >Count</text>
<text x="367.75" y="550.02" font-family='"Liberation Serif", serif' font-size="11.72" fill="#000" font-weight="normal" font-style="normal" text-anchor="start" >AutoZone, 3400 State Ave, KS 66102</text>
<text x="687.50" y="550.02" font-family='"Liberation Serif", serif' font-size="11.72" fill="#000" font-weight="normal" font-style="normal" text-anchor="start" >1</text>
<text x="367.75" y="570.95" font-family='"Liberation Serif", serif' font-size="11.72" fill="#000" font-weight="normal" font-style="normal" text-anchor="start" >Bank of America, 1314 N 38th St, KS 66102</text>
<text x="687.50" y="570.95" font-family='"Liberation Serif", serif' font-size="11.72" fill="#000" font-weight="normal" font-style="normal" text-anchor="start" >1</text>
<text x="367.75" y="591.88" font-family='"Liberation Serif", serif' font-size="11.72" fill="#000" font-weight="normal" font-style="normal" text-anchor="start" >Bishop Ward High School, 708 N 18th St, KS 66102</text>
<text x="687.50" y="591.88" font-family='"Liberation Serif", serif' font-size="11.72" fill="#000" font-weight="normal" font-style="normal" text-anchor="start" >5</text>
<text x="367.75" y="612.81" font-family='"Liberation Serif", serif' font-size="11.72" fill="#000" font-weight="normal" font-style="normal" text-anchor="start" >Cornelia Street, 2501 Minnesota Ave, KS 66102</text>
<text x="687.50" y="612.81" font-family='"Liberation Serif", serif' font-size="11.72" fill="#000" font-weight="normal" font-style="normal" text-anchor="start" >3</text>
<text x="367.75" y="633.74" font-family='"Liberation Serif", serif' font-size="11.72" fill="#000" font-weight="normal" font-style="normal" text-anchor="start" >Dollar General, 3716 State Ave, KS 66102</text>
<text x="687.50" y="633.74" font-family='"Liberation Serif", serif' font-size="11.72" fill="#000" font-weight="normal" font-style="normal" text-anchor="start" >1</text>
<text x="367.75" y="654.67" font-family='"Liberation Serif", serif' font-size="11.72" fill="#000" font-weight="normal" font-style="normal" text-anchor="start" >Elementary School, 2500 Wood Ave, KS 66104</text>
<text x="687.50" y="654.67" font-family='"Liberation Serif", serif' font-size="11.72" fill="#000" font-weight="normal" font-style="normal" text-anchor="start" >2</text>
<text x="367.75" y="675.60" font-family='"Liberation Serif", serif' font-size="11.72" fill="#000" font-weight="normal" font-style="normal" text-anchor="start" >Los Amigos, 2610 State Ave, KS 66102</text>
<text x="687.50" y="675.60" font-family='"Liberation Serif", serif' font-size="11.72" fill="#000" font-weight="normal" font-style="normal" text-anchor="start" >2</text>
<text x="367.75" y="696.53" font-family='"Liberation Serif", serif' font-size="11.72" fill="#000" font-weight="normal" font-style="normal" text-anchor="start" >Sumner Academy 1610 N 8th St, KS 66101</text>
<text x="687.50" y="696.53" font-family='"Liberation Serif", serif' font-size="11.72" fill="#000" font-weight="normal" font-style="normal" text-anchor="start" >1</text>
<text x="367.75" y="717.46" font-family='"Liberation Serif", serif' font-size="11.72" fill="#000" font-weight="normal" font-style="normal" text-anchor="start" >Wyandotte School, 2501 Minnesota Ave, KS 66102</text>
<text x="687.50" y="717.46" font-family='"Liberation Serif", serif' font-size="11.72" fill="#000" font-weight="normal" font-style="normal" text-anchor="start" >1</text>
<rect x="872.00" y="200.60" width="559.20" height="292.80" fill="#fff" stroke="#bfbfbf" stroke-width="1.3"/>
<path d="M1151.5 347.3 L1151.50 254.10 A93.2 93.2 0 0 1 1185.17 260.39 Z" fill="#5b70c3" stroke="#5b70c3" stroke-width="0.4" stroke-linejoin="round"/>
<path d="M1151.5 347.3 L1185.17 260.39 A93.2 93.2 0 0 1 1214.29 278.42 Z" fill="#9ecb7f" stroke="#9ecb7f" stroke-width="0.4" stroke-linejoin="round"/>
<path d="M1151.5 347.3 L1217.86 274.51 A98.5 98.5 0 0 1 1203.35 431.05 Z" fill="#f8db72" stroke="#f8db72" stroke-width="0.4" stroke-linejoin="round"/>
<path d="M1151.5 347.3 L1200.56 426.54 A93.2 93.2 0 0 1 1102.44 426.54 Z" fill="#e26866" stroke="#e26866" stroke-width="0.4" stroke-linejoin="round"/>
<path d="M1151.5 347.3 L1102.44 426.54 A93.2 93.2 0 0 1 1077.12 403.47 Z" fill="#7cbde0" stroke="#7cbde0" stroke-width="0.4" stroke-linejoin="round"/>
<path d="M1151.5 347.3 L1077.12 403.47 A93.2 93.2 0 0 1 1058.70 338.70 Z" fill="#5aa174" stroke="#5aa174" stroke-width="0.4" stroke-linejoin="round"/>
<path d="M1151.5 347.3 L1058.70 338.70 A93.2 93.2 0 0 1 1088.71 278.42 Z" fill="#e98a5a" stroke="#e98a5a" stroke-width="0.4" stroke-linejoin="round"/>
<path d="M1151.5 347.3 L1088.71 278.42 A93.2 93.2 0 0 1 1117.83 260.39 Z" fill="#9262ae" stroke="#9262ae" stroke-width="0.4" stroke-linejoin="round"/>
<path d="M1151.5 347.3 L1117.83 260.39 A93.2 93.2 0 0 1 1151.50 254.10 Z" fill="#dc80c7" stroke="#dc80c7" stroke-width="0.4" stroke-linejoin="round"/>
<path d="M1168.60 253.70 L1171.70 239.40 L1187.00 239.40" fill="none" stroke="#5b70c3" stroke-width="1.1"/>
<text x="1192.60" y="244.00" font-family='"Liberation Sans", sans-serif' font-size="12.5" fill="#3a3a3a" font-weight="normal" font-style="normal" text-anchor="start" >AutoZone, 3400 State Ave, KS 66102</text>
<path d="M1201.00 266.60 L1207.40 255.20 L1222.80 255.20" fill="none" stroke="#9ecb7f" stroke-width="1.1"/>
<text x="1228.20" y="259.20" font-family='"Liberation Sans", sans-serif' font-size="12.5" fill="#3a3a3a" font-weight="normal" font-style="normal" text-anchor="start" >Bank of America, 1314 N 3...</text>
<path d="M1250.40 356.50 L1270.40 356.50" fill="none" stroke="#f8db72" stroke-width="1.1"/>
<text x="1276.40" y="361.20" font-family='"Liberation Sans", sans-serif' font-size="12.5" fill="#3a3a3a" font-weight="normal" font-style="normal" text-anchor="start" >Bishop Ward High S...</text>
<path d="M1151.90 440.10 L1151.90 456.70 L1136.00 456.70" fill="none" stroke="#e26866" stroke-width="1.1"/>
<text x="1130.30" y="461.20" font-family='"Liberation Sans", sans-serif' font-size="12.5" fill="#3a3a3a" font-weight="normal" font-style="normal" text-anchor="end" >Cornelia Street, 2501 Minnesota A...</text>
<path d="M1087.00 417.30 L1083.30 427.50 L1068.00 427.50" fill="none" stroke="#7cbde0" stroke-width="1.1"/>
<text x="1061.70" y="432.40" font-family='"Liberation Sans", sans-serif' font-size="12.5" fill="#3a3a3a" font-weight="normal" font-style="normal" text-anchor="end" >Dollar General, 3716 St...</text>
<path d="M1061.50 371.90 L1053.60 375.80 L1036.00 375.80" fill="none" stroke="#5aa174" stroke-width="1.1"/>
<text x="1030.00" y="380.80" font-family='"Liberation Sans", sans-serif' font-size="12.5" fill="#3a3a3a" font-weight="normal" font-style="normal" text-anchor="end" >Elementary School, ...</text>
<path d="M1067.30 305.00 L1058.30 298.20 L1043.50 298.20" fill="none" stroke="#e98a5a" stroke-width="1.1"/>
<text x="1037.20" y="302.20" font-family='"Liberation Sans", sans-serif' font-size="12.5" fill="#3a3a3a" font-weight="normal" font-style="normal" text-anchor="end" >Los Amigos, 2610 Sta...</text>
<path d="M1102.30 266.60 L1097.50 254.20 L1081.80 254.20" fill="none" stroke="#9262ae" stroke-width="1.1"/>
<text x="1075.50" y="258.60" font-family='"Liberation Sans", sans-serif' font-size="12.5" fill="#3a3a3a" font-weight="normal" font-style="normal" text-anchor="end" >Sumner Academy 1610 N 8th...</text>
<path d="M1134.30 254.20 L1131.00 239.40 L1115.70 239.40" fill="none" stroke="#dc80c7" stroke-width="1.1"/>
<text x="1110.00" y="243.60" font-family='"Liberation Sans", sans-serif' font-size="12.5" fill="#3a3a3a" font-weight="normal" font-style="normal" text-anchor="end" >Wyandotte School, 2501 Minneso...</text>
<defs><filter id="sh" x="-10%" y="-30%" width="120%" height="160%"><feDropShadow dx="0" dy="1" stdDeviation="3" flood-color="#000" flood-opacity="0.2"/></filter></defs>
</svg>
<div style="position:absolute;left:887.7px;top:376.1px;width:355.2px;height:57.6px;box-sizing:border-box;border:1.1px solid #eac25e;border-radius:4px;background:rgba(52,52,52,0.7);box-shadow:1px 3px 9px rgba(0,0,0,0.22)"></div>
<svg width="1536" height="783" viewBox="0 0 1536 783">
<text x="898.20" y="398.20" font-family='"Liberation Sans", sans-serif' font-size="12.8" fill="#f2f2f2" font-weight="normal" font-style="normal" text-anchor="start" >Count</text>
<circle cx="903.9" cy="415.8" r="5.2" fill="#f0c75a"/>
<text x="915.60" y="421.10" font-family='"Liberation Sans", sans-serif' font-size="12.5" fill="#f2f2f2" font-weight="normal" font-style="normal" text-anchor="start" >Bishop Ward High School, 708 N 18th St, KS 66102</text>
<text x="1230.80" y="421.10" font-family='"Liberation Sans", sans-serif' font-size="12.5" fill="#f2f2f2" font-weight="normal" font-style="normal" text-anchor="end" >5</text>
<rect x="39.5" y="736.3" width="1536" height="12" fill="#fff"/>
<line x1="39.5" y1="736.3" x2="39.5" y2="748.3" stroke="#e3e3e3" stroke-width="1.3"/>
<line x1="39.5" y1="736.3" x2="1536" y2="736.3" stroke="#e3e3e3" stroke-width="1.2"/>
<rect x="41.4" y="738.2" width="601" height="9.4" rx="4.7" fill="#c9c9c9"/>
<line x1="1501.4" y1="736.3" x2="1501.4" y2="748" stroke="#e6e6e6" stroke-width="1"/>
<line x1="1518.6" y1="736.3" x2="1518.6" y2="748" stroke="#e6e6e6" stroke-width="1"/>
<path d="M1511 739.8 L1507.6 742.5 L1511 745.2 Z" fill="#8a8a8a"/>
<path d="M1526.6 739.8 L1530 742.5 L1526.6 745.2 Z" fill="#8a8a8a"/>
<rect x="1523.2" y="127" width="12" height="609.3" fill="#fff"/>
<line x1="1523.2" y1="127" x2="1523.2" y2="736.3" stroke="#e3e3e3" stroke-width="1"/>
<rect x="1525.0" y="149.3" width="8.5" height="309.2" rx="4.25" fill="#c9c9c9"/>
<line x1="1523.2" y1="702.4" x2="1535" y2="702.4" stroke="#e6e6e6" stroke-width="1"/>
<line x1="1523.2" y1="718.8" x2="1535" y2="718.8" stroke="#e6e6e6" stroke-width="1"/>
<path d="M1526.6 711.4 L1529.4 708.4 L1532.2 711.4 Z" fill="#8a8a8a"/>
<path d="M1526.6 726.2 L1529.4 729.2 L1532.2 726.2 Z" fill="#8a8a8a"/>
<rect x="0" y="748.3" width="1536" height="34.7" fill="#f8f8fa"/>
<line x1="0" y1="748.3" x2="1536" y2="748.3" stroke="#e3e3e3" stroke-width="1.2"/>
<line x1="0" y1="781.6" x2="1536" y2="781.6" stroke="#e0e0e0" stroke-width="1.2"/>
<path d="M58.0 758.2 V771.2 M51.6 764.7 H64.4" fill="none" stroke="#444" stroke-width="1.8"/>
<path d="M73.8 759.2 H86.2 M73.8 764.7 H86.2 M73.8 770.2 H86.2" fill="none" stroke="#444" stroke-width="1.8" stroke-linecap="round"/>
<line x1="0.6" y1="748" x2="0.6" y2="783" stroke="#e3e3e3" stroke-width="1.2"/>
<rect x="91.4" y="749.4" width="137.4" height="29.6" fill="#efefef" stroke="#e4e4e4" stroke-width="1"/>
<rect x="228.8" y="749.4" width="130.9" height="29.6" fill="#fafafa" stroke="#e6e6e6" stroke-width="1"/>
<text x="100.40" y="770.90" font-family='"Liberation Sans", sans-serif' font-size="13.3" fill="#2e2e2e" font-weight="normal" font-style="normal" text-anchor="start" >Delivery Planning</text>
<path d="M216.4 763.2 H224.4 L220.4 767.4 Z" fill="#999"/>
<text x="237.60" y="770.90" font-family='"Liberation Sans", sans-serif' font-size="13.7" fill="#6e6e6e" font-weight="normal" font-style="normal" text-anchor="start" >Pivot for regions</text>
<path d="M347.8 763.2 H355.8 L351.8 767.4 Z" fill="#999"/>
<line x1="0.5" y1="53" x2="0.5" y2="783" stroke="#e6e6e6" stroke-width="1"/>
</svg>
</body></html>
